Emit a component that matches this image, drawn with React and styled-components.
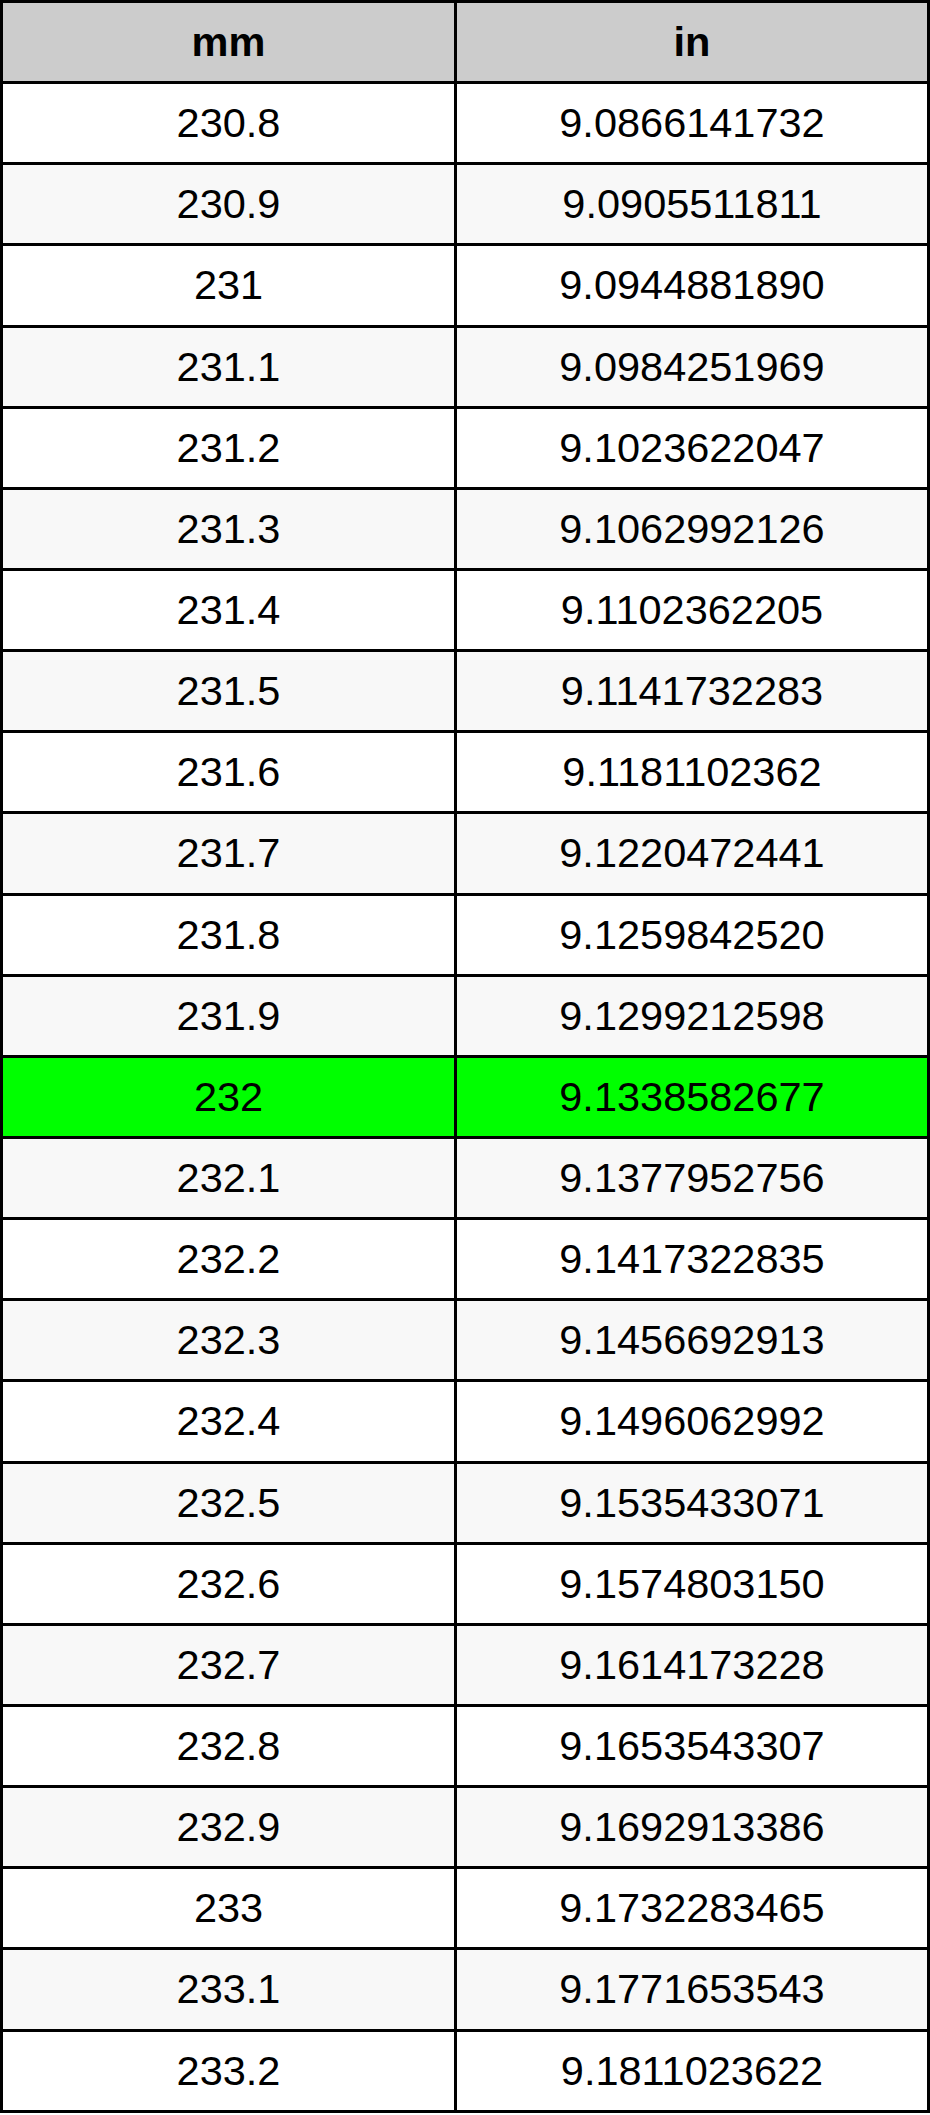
import React from 'react'
import styled, { createGlobalStyle } from 'styled-components'

const GlobalStyle = createGlobalStyle`
  html, body {
    margin: 0;
    padding: 0;
    background: #ffffff;
  }
  body {
    font-family: "Liberation Sans", Arial, sans-serif;
  }
`

const Table = styled.div`
  display: grid;
  grid-template-columns: 451px 470px;
  grid-auto-rows: 78.15px;
  gap: 3px;
  padding: 3px;
  width: 930px;
  box-sizing: border-box;
  background: #000000;
`

const Cell = styled.div`
  display: flex;
  align-items: center;
  justify-content: center;
  font-size: 41.5px;
  color: #000000;
  background: ${(props) => props.bg};
  font-weight: ${(props) => (props.head ? 700 : 400)};
`

const rows = [
  ['230.8', '9.0866141732'],
  ['230.9', '9.0905511811'],
  ['231', '9.0944881890'],
  ['231.1', '9.0984251969'],
  ['231.2', '9.1023622047'],
  ['231.3', '9.1062992126'],
  ['231.4', '9.1102362205'],
  ['231.5', '9.1141732283'],
  ['231.6', '9.1181102362'],
  ['231.7', '9.1220472441'],
  ['231.8', '9.1259842520'],
  ['231.9', '9.1299212598'],
  ['232', '9.1338582677'],
  ['232.1', '9.1377952756'],
  ['232.2', '9.1417322835'],
  ['232.3', '9.1456692913'],
  ['232.4', '9.1496062992'],
  ['232.5', '9.1535433071'],
  ['232.6', '9.1574803150'],
  ['232.7', '9.1614173228'],
  ['232.8', '9.1653543307'],
  ['232.9', '9.1692913386'],
  ['233', '9.1732283465'],
  ['233.1', '9.1771653543'],
  ['233.2', '9.1811023622'],
]

function rowColor(mm, i) {
  if (mm === '232') return '#00ff00'
  return i % 2 === 0 ? '#ffffff' : '#f8f8f8'
}

export default function App() {
  return (
    <>
      <GlobalStyle />
      <Table>
        <Cell head bg="#cccccc">mm</Cell>
        <Cell head bg="#cccccc">in</Cell>
        {rows.map(([mm, inch], i) => (
          <React.Fragment key={mm}>
            <Cell bg={rowColor(mm, i)}>{mm}</Cell>
            <Cell bg={rowColor(mm, i)}>{inch}</Cell>
          </React.Fragment>
        ))}
      </Table>
    </>
  )
}
